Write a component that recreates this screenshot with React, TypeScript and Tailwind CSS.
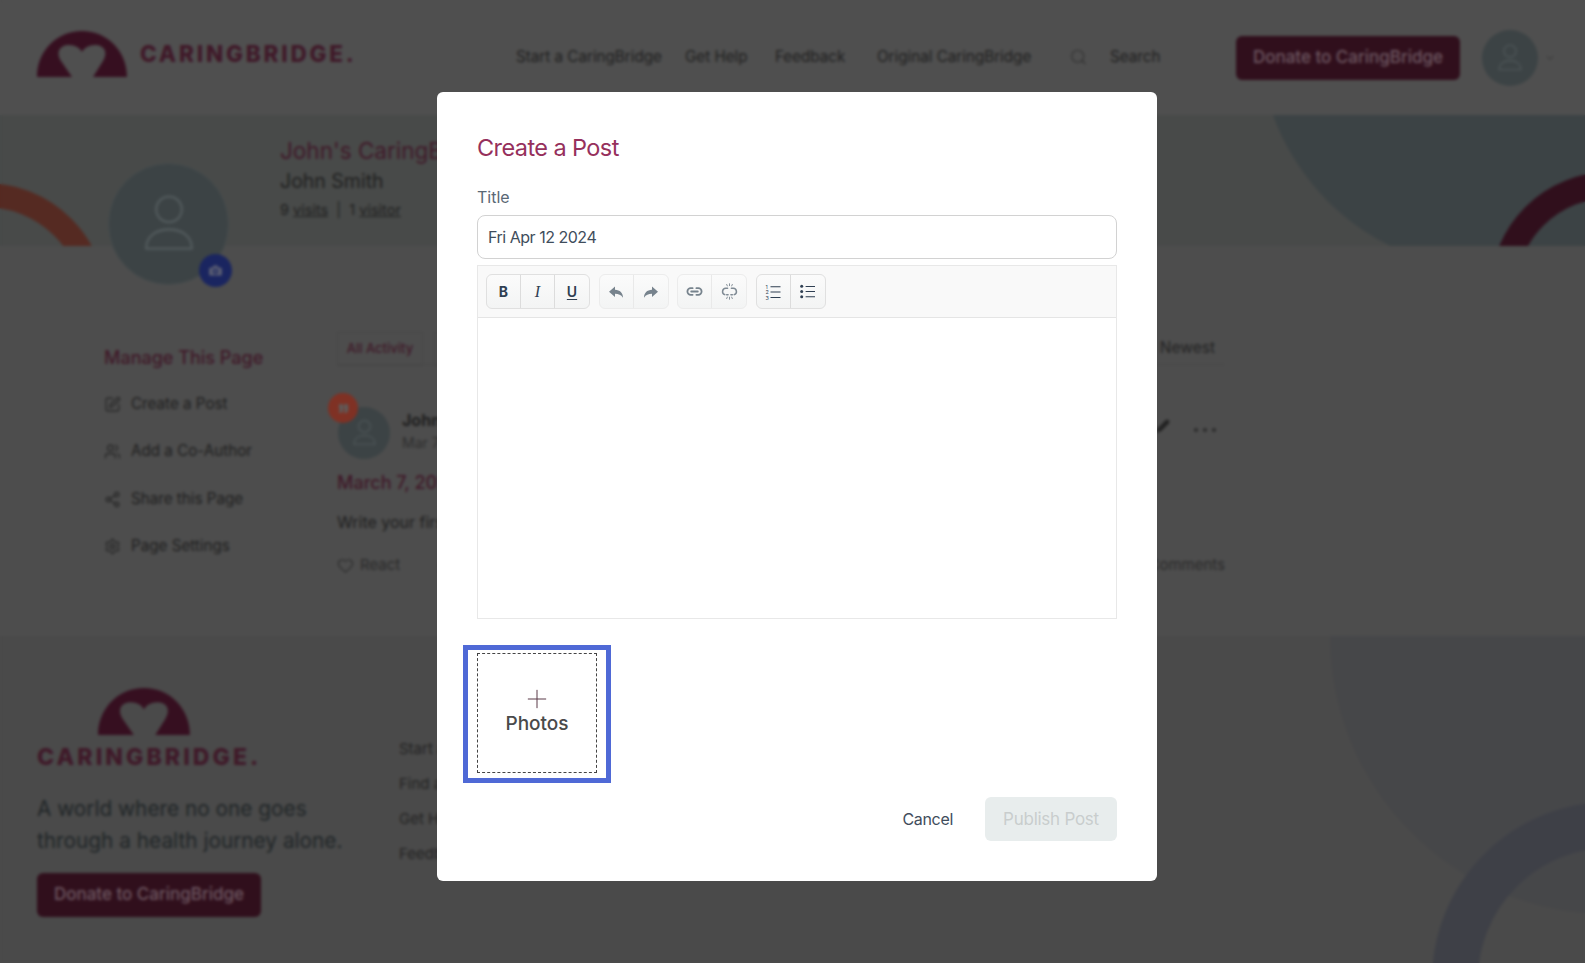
import { Camera, ChevronDown, Heart, MessageCircle, Pencil, Plus, Quote, Search, Settings, Share2, SquarePen, Users } from "lucide-react"

const sideLinks = [
  { label: "Create a Post", Icon: SquarePen },
  { label: "Add a Co-Author", Icon: Users },
  { label: "Share this Page", Icon: Share2 },
  { label: "Page Settings", Icon: Settings },
]

function Dome({ className }: { className: string }) {
  return (
    <svg viewBox="0 0 90 46" className={className} fill="#360f20">
      <path d="M0 46C0 20 20 0 45 0C70 0 90 20 90 46H56L66 30C72 20 66 14 58 14C52 14 47 17 45 21C43 17 38 14 32 14C24 14 18 20 24 30L35 46Z" />
    </svg>
  )
}

function PersonIcon({ className }: { className: string }) {
  return (
    <svg viewBox="0 0 60 70" className={className} fill="none" stroke="#525a5c" strokeWidth="2.5">
      <circle cx="30" cy="19" r="14" />
      <path d="M5 62C5 48 16 41 30 41C44 41 55 48 55 62Z" strokeLinejoin="round" />
    </svg>
  )
}

function ReplyIcon({ flip }: { flip?: boolean }) {
  return (
    <svg viewBox="0 0 16 16" className={`w-[16px] h-[16px] ${flip ? "-scale-x-100" : ""}`} fill="#77838d">
      <path d="M7 2.5L1 7.8L7 13V9.8C10.6 9.8 13 10.8 15 13.8C15 9 12 6 7 5.8Z" />
    </svg>
  )
}

function LinkIcon() {
  return (
    <svg viewBox="0 0 18 18" className="w-[17px] h-[17px]" fill="none" stroke="#77838d" strokeWidth="1.9" strokeLinecap="round">
      <path d="M7 5.5H5a3.5 3.5 0 0 0 0 7h2M11 5.5h2a3.5 3.5 0 0 1 0 7h-2M5.5 9h7" />
    </svg>
  )
}

function UnlinkIcon() {
  return (
    <svg viewBox="0 0 18 18" className="w-[17px] h-[17px]" fill="none" stroke="#7f8a94" strokeWidth="1.6" strokeLinecap="round">
      <path d="M7 5.5H5a3.5 3.5 0 0 0-1 6.8M11 5.5h2a3.5 3.5 0 0 1 1 6.8M6 12.5h1.5M10.5 12.5H12" />
      <path d="M9 .8v2M6 1.5l.7 1.6M12 1.5l-.7 1.6M9 15v2.2M6 16.5l.7-1.6M12 16.5l-.7-1.6" strokeWidth="1" />
    </svg>
  )
}

function NumbersIcon() {
  return (
    <svg viewBox="0 0 16 16" className="w-[16px] h-[16px]" fill="#2f3f52">
      <text x="0.5" y="5" fontSize="5.4" fontFamily="Inter, sans-serif">1</text>
      <text x="0.5" y="10.3" fontSize="5.4" fontFamily="Inter, sans-serif">2</text>
      <text x="0.5" y="15.6" fontSize="5.4" fontFamily="Inter, sans-serif">3</text>
      <path d="M5.5 2.3h10v1H5.5zM5.5 7.6h10v1H5.5zM5.5 12.9h10v1H5.5z" />
    </svg>
  )
}

function BulletsIcon() {
  return (
    <svg viewBox="0 0 16 16" className="w-[15px] h-[15px]" fill="#2f3f52">
      <circle cx="1.8" cy="2.5" r="1.6" />
      <circle cx="1.8" cy="8" r="1.6" />
      <circle cx="1.8" cy="13.5" r="1.6" />
      <path d="M6 2h10v1.1H6zM6 7.5h10v1.1H6zM6 13h10v1.1H6z" />
    </svg>
  )
}

function ToolGroup({ items, faded }: { items: React.ReactNode[]; faded?: boolean }) {
  return (
    <div className={`flex h-[35px] rounded-md border bg-gradient-to-b from-[#fbfbfb] to-[#f3f4f4] divide-x ${faded ? "border-[#ececec] divide-[#e9e9e9]" : "border-[#e0e0e0] divide-[#dcdcdc]"}`}>
      {items.map((item, i) => (
        <div key={i} className="w-[34px] flex items-center justify-center">
          {item}
        </div>
      ))}
    </div>
  )
}

function Logo({ className }: { className: string }) {
  return <span className={`font-extrabold text-[#3f1828] ${className}`}>CARINGBRIDGE.</span>
}

function DonateButton() {
  return (
    <div className="w-[224px] h-[44px] rounded-md bg-[#300f1c] text-[#6e5862] flex items-center justify-center text-[17px] font-medium">
      Donate to CaringBridge
    </div>
  )
}

export default function App() {
  return (
    <div className="relative h-[963px] overflow-hidden bg-[#4d4d4d] font-['Inter',sans-serif]">
      {/* page behind the dialog */}
      <div className="flex flex-col h-full">
        <header className="h-[115px] shrink-0 flex items-center bg-[#4f4f4f] pl-[37px]">
          <div className="flex items-end gap-[13px] w-[479px] self-start mt-[31px]">
            <Dome className="w-[90px] h-[46px]" />
            <Logo className="text-[22.5px] tracking-[0.125em] leading-[36px] pb-[5px] whitespace-nowrap" />
          </div>
          <nav className="flex items-center text-[15.2px] text-[#1e1e1e]">
            <span className="w-[169px]">Start a CaringBridge</span>
            <span className="w-[90px]">Get Help</span>
            <span className="w-[102px]">Feedback</span>
            <span className="w-[185px]">Original CaringBridge</span>
            <Search size={18} className="w-[33px] text-[#333]" strokeWidth={1.5} />
            <span className="w-[126px] ml-[15px]">Search</span>
          </nav>
          <DonateButton />
          <div className="w-[56px] h-[56px] ml-[22px] rounded-full bg-[#3c4345] flex items-center justify-center">
            <PersonIcon className="w-[26px] h-[32px]" />
          </div>
          <ChevronDown size={12} className="ml-[6px] text-[#333]" />
        </header>

        <section className="relative h-[131px] shrink-0 bg-[#484a49]">
          <div className="absolute inset-0 overflow-hidden">
            <div className="absolute left-[-137px] top-[68px] w-[244px] h-[244px] rounded-full border-[24px] border-[#552a22]" />
            <div className="absolute left-[1259px] top-[-315px] w-[470px] h-[470px] rounded-full bg-[#3c4345]" />
            <div className="absolute left-[1490px] top-[57px] w-[240px] h-[240px] rounded-full border-[26px] border-[#300f1c]" />
          </div>
          <div className="relative flex pl-[108px] pt-[48px]">
            <div className="relative w-[121px] h-[122px] rounded-full bg-[#3c4345] border border-[#474d4e] flex items-center justify-center">
              <PersonIcon className="w-[56px] h-[64px]" />
              <div className="absolute right-[-4px] bottom-[-3px] w-[33px] h-[33px] rounded-full bg-[#1a2560] flex items-center justify-center">
                <Camera size={17} className="text-[#1a2560]" fill="#5c5f73" />
              </div>
            </div>
            <div className="ml-[51px] -mt-[28px]">
              <div className="text-[22.5px] leading-[32px] text-[#3f1828]">John's CaringBridge</div>
              <div className="text-[19.5px] leading-[28px] text-[#1e1e1e]">John Smith</div>
              <div className="text-[14.5px] leading-[30px] text-[#1e1e1e]">
                9 <span className="underline">visits</span> &nbsp;|&nbsp; 1 <span className="underline">visitor</span>
              </div>
            </div>
          </div>
        </section>

        <main className="h-[390px] shrink-0 flex pl-[104px] pt-[87px] bg-[#4d4d4d]">
          <aside className="w-[233px] shrink-0 mt-[11px]">
            <h3 className="text-[18px] leading-[28px] font-medium text-[#3f1828]">Manage This Page</h3>
            <ul className="mt-[20px] flex flex-col gap-[23.5px] text-[15.2px] text-[#1e1e1e]">
              {sideLinks.map(({ label, Icon }) => (
                <li key={label} className="flex items-center gap-[10px] h-[24px]">
                  <Icon size={17} strokeWidth={1.6} className="text-[#222]" />
                  {label}
                </li>
              ))}
            </ul>
          </aside>
          <div className="w-[888px] shrink-0 -mt-[1px]">
            <div className="flex justify-between h-[33px] border-b border-[#474747]">
              <div className="flex gap-[11px]">
                <div className="w-[86px] h-[34px] border border-[#474747] flex items-center justify-center text-[13px] text-[#3f1828] font-medium">All Activity</div>
                <div className="w-[86px] h-[34px] border border-[#474747]" />
              </div>
              <div className="text-[15.5px] text-[#222] leading-[32px] pr-[10px]">Newest</div>
            </div>
            <div className="flex items-start justify-between mt-[42px] pl-[1px]">
              <div className="relative w-[52px] h-[52px] rounded-full bg-[#3c4345] flex items-center justify-center">
                <PersonIcon className="w-[25px] h-[30px]" />
                <div className="absolute left-[-10px] top-[-14px] w-[30px] h-[30px] rounded-full bg-[#7f3124] flex items-center justify-center">
                  <Quote size={11} fill="#5c5f5f" className="text-[#5c5f5f]" />
                </div>
              </div>
              <div className="flex-1 ml-[12px] mt-[2px]">
                <div className="font-bold text-[16px] leading-[22px] text-[#1e1e1e]">John Smith</div>
                <div className="text-[14px] leading-[23px] text-[#2e2e2e]">Mar 7, 2024</div>
              </div>
              <div className="flex items-center gap-[24px] pr-[9px] mt-[12px]">
                <Pencil size={14} className="text-[#222]" fill="#222" />
                <div className="flex gap-[5px] mt-[8px]">
                  <span className="w-[4px] h-[4px] rounded-full bg-[#2a2a2a]" />
                  <span className="w-[4px] h-[4px] rounded-full bg-[#2a2a2a]" />
                  <span className="w-[4px] h-[4px] rounded-full bg-[#2a2a2a]" />
                </div>
              </div>
            </div>
            <div className="mt-[11px] text-[18px] leading-[26px] font-medium text-[#3f1828]">March 7, 2024</div>
            <div className="mt-[13px] text-[16px] leading-[26px] text-[#1e1e1e]">Write your first post</div>
            <div className="mt-[19px] flex items-center text-[15px] text-[#2a2a2a]">
              <Heart size={17} strokeWidth={1.6} className="mr-[6px]" />
              React
              <MessageCircle size={17} strokeWidth={1.6} className="ml-[38px]" />
              <span className="ml-auto">0 Comments</span>
            </div>
          </div>
        </main>

        <footer className="relative flex-1 overflow-hidden bg-[#4a4a4a] flex pl-[37px] pt-[52px]">
          <div className="absolute left-[1330px] top-[-278px] w-[556px] h-[556px] rounded-full bg-[#464749]" />
          <div className="absolute left-[1432px] top-[166px] w-[356px] h-[356px] rounded-full border-[46px] border-[#3d3f47]/90" />
          <div className="relative w-[362px] shrink-0">
            <div className="flex flex-col">
              <Dome className="w-[94px] h-[47px] ml-[60px]" />
              <Logo className="text-[23px] tracking-[0.135em] leading-[24px] mt-[10px] whitespace-nowrap" />
            </div>
            <p className="mt-[24px] text-[20.8px] leading-[32px] text-[#1f2527]">
              A world where no one goes
              <br />
              through a health journey alone.
            </p>
            <div className="mt-[16px]">
              <DonateButton />
            </div>
          </div>
          <ul className="relative flex flex-col gap-[14px] pt-[50px] text-[15px] leading-[21px] text-[#222]">
            <li>Start a CaringBridge</li>
            <li>Find a CaringBridge</li>
            <li>Get Help</li>
            <li>Feedback</li>
          </ul>
        </footer>
      </div>

      {/* dialog */}
      <div className="absolute inset-0 backdrop-blur-[1.5px] flex justify-center pt-[92px] pl-[9px]">
        <div className="w-[720px] h-[789px] rounded-md bg-white px-10 flex flex-col text-[#3f4d5c]">
          <h2 className="mt-[40px] text-[23.5px] leading-[32px] tracking-[-0.025em] text-[#96305c]">Create a Post</h2>
          <label className="mt-[21px] text-[16px] leading-[24px] text-[#5a6875]">Title</label>
          <div className="mt-[6px] h-[44px] rounded-lg border border-[#d2d2d2] flex items-center px-[10px] text-[16px] tracking-[-0.03em]">
            Fri Apr 12 2024
          </div>
          <div className="mt-[6px] h-[354px] border border-[#e8e8e8] flex flex-col">
            <div className="h-[52px] shrink-0 bg-[#f9f9f9] border-b border-[#e5e5e5] flex items-center gap-[8.5px] pl-[8px]">
              <ToolGroup
                items={[
                  <span className="text-[14px] font-bold text-[#2f3f52]">B</span>,
                  <span className="text-[16px] font-medium italic font-['Liberation_Serif',serif] text-[#2f3f52]">I</span>,
                  <span className="text-[14px] font-semibold underline underline-offset-2 text-[#2f3f52]">U</span>,
                ]}
              />
              <ToolGroup faded items={[<ReplyIcon />, <ReplyIcon flip />]} />
              <ToolGroup faded items={[<LinkIcon />, <UnlinkIcon />]} />
              <ToolGroup items={[<NumbersIcon />, <BulletsIcon />]} />
            </div>
          </div>
          <button className="mt-[26px] -ml-[14px] w-[148px] h-[138px] border-[5px] border-[#4f69d6] px-[9px] pt-[3px] flex items-start">
            <div className="w-[120px] h-[120px] border border-dashed border-[#444] flex flex-col items-center justify-center pb-[6px]">
              <Plus size={30} strokeWidth={0.8} className="text-[#5a3a48]" />
              <span className="-mt-[3px] text-[19px] leading-[26px] font-medium text-[#4a4a4a]">Photos</span>
            </div>
          </button>
          <div className="mt-[14px] flex items-center justify-end">
            <span className="text-[16px] tracking-[-0.02em] mr-[32px]">Cancel</span>
            <button className="w-[132px] h-[44px] rounded-md bg-[#e8eded] text-[17px] tracking-[-0.015em] pt-[1px] text-[#c9cdcd]">Publish Post</button>
          </div>
        </div>
      </div>
    </div>
  )
}
